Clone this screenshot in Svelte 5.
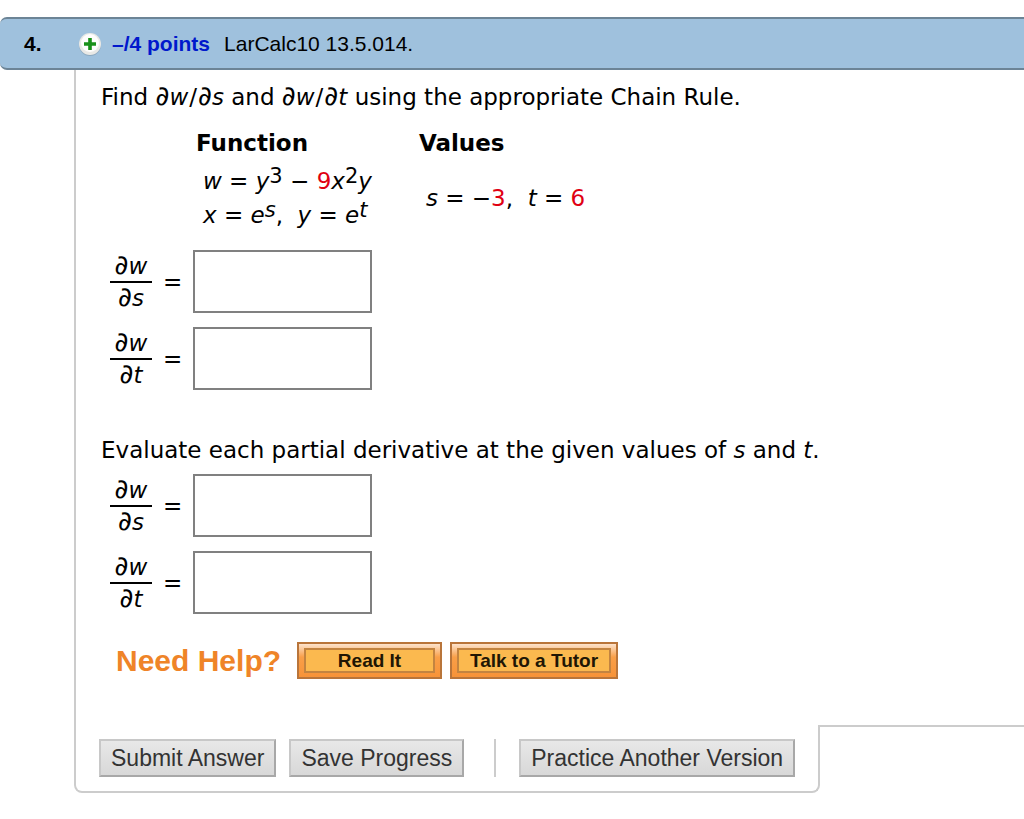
<script lang="ts">
    interface Answer {
        id: string;
        variable: string;
    }

    const derivatives: Answer[] = [
        { id: "dw-ds", variable: "s" },
        { id: "dw-dt", variable: "t" },
    ];
    const evaluated: Answer[] = [
        { id: "value-ds", variable: "s" },
        { id: "value-dt", variable: "t" },
    ];

    let answers: Record<string, string> = $state({
        "dw-ds": "",
        "dw-dt": "",
        "value-ds": "",
        "value-dt": "",
    });
</script>

{#snippet partial(variable: string)}
    <i><span class="partial">∂</span>{variable}</i>
{/snippet}

{#snippet ratio(variable: string)}
    {@render partial("w")}<span class="slash">/</span>{@render partial(variable)}
{/snippet}

{#snippet answerRows(rows: Answer[])}
    <div class="answers">
        {#each rows as row (row.id)}
            <div class="answer">
                <label class="answer__label" for={row.id}>
                    <span class="fraction">
                        <span class="fraction__top">{@render partial("w")}</span>
                        <span>{@render partial(row.variable)}</span>
                    </span>
                    <span>=</span>
                </label>
                <input id={row.id} type="text" autocomplete="off" bind:value={answers[row.id]} />
            </div>
        {/each}
    </div>
{/snippet}

<section class="question">
    <header class="question__header">
        <span class="question__number">4.</span>
        <button class="expand" aria-label="Show details">
            <svg viewBox="0 0 24 24" width="24" height="24">
                <circle cx="12" cy="13" r="11" fill="#7f98ac" opacity="0.6" />
                <circle cx="12" cy="12" r="11" fill="#e9e9e6" />
                <circle cx="12" cy="11" r="9" fill="#fdfdfc" />
                <path d="M10.200 6h3.600v4.200H18v3.600h-4.200V18h-3.600v-4.200H6v-3.600h4.200z" fill="#189018" />
            </svg>
        </button>
        <a class="points" href="#points">–/4 points</a>
        <span>LarCalc10 13.5.014.</span>
    </header>

    <div class="question__body">
        <p>Find {@render ratio("s")} and {@render ratio("t")} using the appropriate Chain Rule.</p>

        <table>
            <thead>
                <tr>
                    <th>Function</th>
                    <th>Values</th>
                </tr>
            </thead>
            <tbody>
                <tr>
                    <td>
                        <div><i>w</i> = <i>y</i><sup>3</sup> − <b>9</b><i>x</i><sup>2</sup><i>y</i></div>
                        <div><i>x</i> = <i>e</i><sup><i>s</i></sup>,&nbsp; <i>y</i> = <i>e</i><sup><i>t</i></sup></div>
                    </td>
                    <td><i>s</i> = −<b>3</b>,&nbsp; <i>t</i> = <b>6</b></td>
                </tr>
            </tbody>
        </table>

        {@render answerRows(derivatives)}

        <p class="evaluate">
            Evaluate each partial derivative at the given values of <i>s</i> and <i>t</i>.
        </p>

        {@render answerRows(evaluated)}

        <div class="help">
            <span class="help__title">Need Help?</span>
            <button class="help__button">Read It</button>
            <button class="help__button help__button--wide">Talk to a Tutor</button>
        </div>
    </div>

    <footer class="question__footer">
        <div class="actions">
            <button>Submit Answer</button>
            <button>Save Progress</button>
            <span class="actions__divider"></span>
            <button>Practice Another Version</button>
        </div>
        <div class="question__edge"></div>
    </footer>
</section>

<style>
    :global(body) {
        background: #fff;
    }
    .question {
        padding-top: 17px;
        color: #000;
        font-family: "DejaVu Sans", Verdana, sans-serif;
        font-size: 23px;
        line-height: 28px;
    }
    button {
        font-family: "Liberation Sans", Arial, sans-serif;
        cursor: pointer;
    }

    /* Header bar */
    .question__header {
        box-sizing: border-box;
        display: flex;
        align-items: center;
        height: 53px;
        padding-left: 24px;
        border: solid #6c8496;
        border-width: 2px 0;
        border-radius: 7px 0 0 7px;
        background: #9fc1dd;
        font-family: "Liberation Sans", Arial, sans-serif;
        font-size: 21px;
    }
    .question__number {
        width: 54px;
        font-weight: bold;
    }
    .expand {
        display: flex;
        padding: 0;
        border: 0;
        background: none;
    }
    .points {
        margin: 0 14px 0 10px;
        color: #0018cc;
        font-weight: bold;
        text-decoration: none;
    }

    /* Body */
    .question__body {
        margin-left: 74px;
        padding: 13px 25px 46px;
        border-left: 2px solid #ccc;
    }
    p {
        margin: 0;
    }
    .partial {
        font-size: 27px;
        line-height: 0;
    }
    .slash {
        padding: 0 1px;
    }
    table {
        margin: 18px 0 18px 95px;
        border-collapse: collapse;
    }
    th {
        padding: 0;
        text-align: left;
    }
    td {
        padding: 7px 47px 0 7px;
        line-height: 34px;
        white-space: nowrap;
    }
    td b {
        color: #e00012;
        font-weight: normal;
    }
    sup {
        font-size: 21px;
        line-height: 0;
        vertical-align: 6px;
    }

    .answers {
        display: flex;
        flex-direction: column;
        gap: 14px;
        padding-left: 9px;
    }
    .answer,
    .answer__label {
        display: flex;
        align-items: center;
        gap: 11px;
    }
    .fraction {
        display: flex;
        flex-direction: column;
        width: 42px;
        text-align: center;
        line-height: 30px;
    }
    .fraction__top {
        border-bottom: 2px solid #000;
    }
    input {
        box-sizing: border-box;
        width: 179px;
        height: 63px;
        padding: 0 10px;
        border: 2px solid #808080;
        font: inherit;
    }
    .evaluate {
        margin: 46px 0 10px;
    }

    .help {
        display: flex;
        align-items: center;
        gap: 8px;
        margin: 28px 0 0 15px;
    }
    .help__title {
        margin-right: 8px;
        color: #ef8428;
        font-family: "Liberation Sans", Arial, sans-serif;
        font-size: 30px;
        font-weight: bold;
    }
    .help__button {
        width: 145px;
        height: 37px;
        padding: 0;
        border: 2px solid #b9753a;
        background: linear-gradient(#fde3cc, #f99f48 40%, #f79338);
        color: #201604;
        font-size: 19px;
        font-weight: bold;
        position: relative;
        isolation: isolate;
    }
    .help__button::before {
        content: "";
        position: absolute;
        inset: 4px 5px;
        z-index: -1;
        border: 2px solid #c38440;
        background: #fbb94f;
    }
    .help__button--wide {
        width: 168px;
    }

    /* Footer tab */
    .question__footer {
        display: flex;
        margin-left: 74px;
    }
    .actions {
        display: flex;
        padding: 14px 23px;
        border: solid #ccc;
        border-width: 0 2px 2px;
        border-radius: 0 0 8px 8px;
    }
    .actions button {
        height: 38px;
        padding: 0 10px;
        border: 2px solid;
        border-color: #c8c8c8 #a8a8a8 #a8a8a8 #c8c8c8;
        background: linear-gradient(#e8e8e8, #d8d8d8);
        color: #333;
        font-size: 23px;
    }
    .actions button + button {
        margin-left: 13px;
    }
    .actions__divider {
        width: 2px;
        margin: 0 23px 0 30px;
        background: #ccc;
    }
    .question__edge {
        flex: 1;
        border-top: 2px solid #ccc;
    }
</style>
